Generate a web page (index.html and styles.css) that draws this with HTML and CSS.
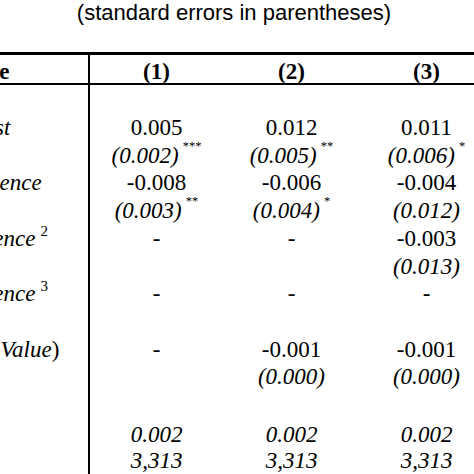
FILE: index.html
```html
<!DOCTYPE html>
<html lang="en">
<head>
<meta charset="utf-8">
<title>Regression table</title>
<link rel="stylesheet" href="styles.css">
</head>
<body>
<div class="page">
  <p class="caption">(standard errors in parentheses)</p>
  <table class="reg">
    <thead>
      <tr>
        <th class="lab head-lab">Variable</th>
        <th class="c1">(1)</th>
        <th class="c2">(2)</th>
        <th class="c3">(3)</th>
      </tr>
    </thead>
    <tbody>
      <tr class="first">
        <td class="lab"><i>Post</i></td>
        <td>0.005</td><td>0.012</td><td>0.011</td>
      </tr>
      <tr>
        <td class="lab"></td>
        <td><i>(0.002)</i><sup class="star">***</sup></td>
        <td><i>(0.005)</i><sup class="star">**</sup></td>
        <td><i>(0.006)</i><sup class="star">*</sup></td>
      </tr>
      <tr>
        <td class="lab"><i>Experience</i></td>
        <td>-0.008</td><td>-0.006</td><td>-0.004</td>
      </tr>
      <tr>
        <td class="lab"></td>
        <td><i>(0.003)</i><sup class="star">**</sup></td>
        <td><i>(0.004)</i><sup class="star">*</sup></td>
        <td><i>(0.012)</i></td>
      </tr>
      <tr>
        <td class="lab"><i>Experience</i><sup class="pow">2</sup></td>
        <td>-</td><td>-</td><td>-0.003</td>
      </tr>
      <tr>
        <td class="lab"></td>
        <td></td><td></td><td><i>(0.013)</i></td>
      </tr>
      <tr>
        <td class="lab"><i>Experience</i><sup class="pow">3</sup></td>
        <td>-</td><td>-</td><td>-</td>
      </tr>
      <tr class="spacer"><td class="lab"></td><td></td><td></td><td></td></tr>
      <tr>
        <td class="lab">ln(<i>Bond Value</i>)</td>
        <td>-</td><td>-0.001</td><td>-0.001</td>
      </tr>
      <tr>
        <td class="lab"></td>
        <td></td><td><i>(0.000)</i></td><td><i>(0.000)</i></td>
      </tr>
      <tr class="gap"><td class="lab"></td><td></td><td></td><td></td></tr>
      <tr class="stat">
        <td class="lab stat-lab"><i>R<sup class="pow">2</sup></i></td>
        <td><i>0.002</i></td><td><i>0.002</i></td><td><i>0.002</i></td>
      </tr>
      <tr class="stat">
        <td class="lab stat-lab"><i>N</i></td>
        <td><i>3,313</i></td><td><i>3,313</i></td><td><i>3,313</i></td>
      </tr>
    </tbody>
  </table>
</div>
</body>
</html>
```

FILE: styles.css
```css
html, body {
  margin: 0;
  padding: 0;
  background: #ffffff;
}

body {
  width: 474px;
  height: 474px;
  overflow: hidden;
  color: #000000;
  font-family: "Liberation Serif", "Times New Roman", serif;
}

.page {
  width: 474px;
}

.caption {
  margin: 0;
  padding-right: 6px;
  font-family: "Liberation Sans", Arial, sans-serif;
  font-size: 22px;
  line-height: 26px;
  text-align: center;
  color: #000000;
}

.reg {
  margin-top: 26px;
  margin-left: -108px;
  border-collapse: separate;
  border-spacing: 0;
  table-layout: fixed;
  width: 601px;
  border-top: 3px solid #000000;
  font-size: 23px;
}

.reg th {
  font-weight: bold;
  font-size: 23px;
  line-height: 22px;
  padding: 6px 0 0 0;
  height: 28px;
  box-sizing: border-box;
  border-bottom: 2px solid #000000;
  text-align: center;
  vertical-align: top;
}

.reg th.lab { width: 198px; }
.reg th.c1 { width: 133px; }
.reg th.c2 { width: 137px; }
.reg th.c3 { width: 133px; }

.reg .lab {
  border-right: 2px solid #000000;
  box-sizing: border-box;
}

.reg th.head-lab {
  text-align: left;
  padding-left: 34px;
}

.reg td {
  padding: 0;
  height: 27.7px;
  line-height: 27.7px;
  text-align: center;
  vertical-align: top;
  white-space: nowrap;
}

.reg tr.first td {
  padding-top: 29px;
}

.reg tr.gap td {
  height: 31px;
}

.reg tr.stat td {
  height: 26px;
  line-height: 26px;
}

.reg td.stat-lab {
  text-align: left;
  padding-left: 10px;
}

.star {
  font-size: 12.5px;
  line-height: 0;
  vertical-align: 13px;
  margin-left: 4px;
  font-style: normal;
  color: #000000;
}

.pow {
  font-size: 15px;
  line-height: 0;
  vertical-align: 10px;
  margin-left: 5px;
}
```
